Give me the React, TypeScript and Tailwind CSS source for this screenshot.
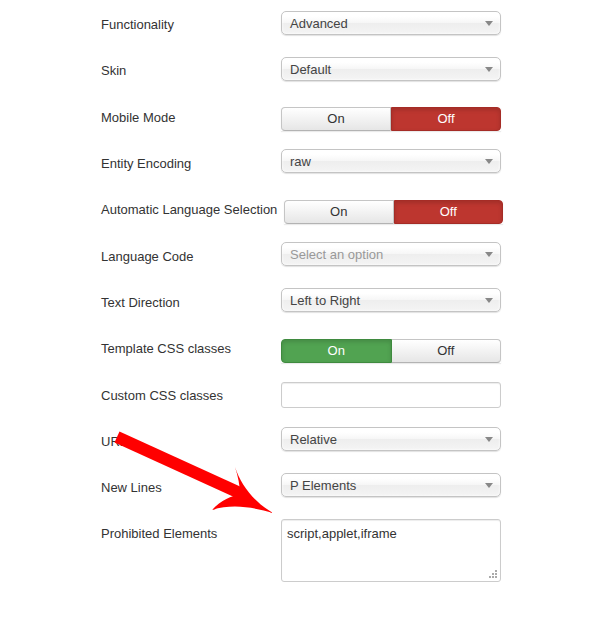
import React from "react";

const FONT = { fontFamily: '"Liberation Sans", Arial, sans-serif' };

function Select({ value, placeholder = false }: { value: string; placeholder?: boolean }) {
  return (
    <div className="relative flex h-[24px] w-[220px] items-center rounded-[5px] border border-[#c4c4c4] bg-[linear-gradient(#ffffff_20%,#f6f6f6_50%,#eeeeee_52%,#f4f4f4_100%)] pl-[8px] pt-[1px] shadow-[0_1px_1px_rgba(0,0,0,0.12),inset_0_0_3px_#fff]">
      <span className={`text-[13px] leading-[22px] ${placeholder ? "text-[#999]" : "text-[#444]"}`}>{value}</span>
      <svg className="absolute right-[7px] top-[9px]" width="8" height="5" viewBox="0 0 8 5">
        <path d="M0 0 H8 L4 5 Z" fill="#888" />
      </svg>
    </div>
  );
}

function Toggle({ on, width = 220 }: { on: boolean; width?: number }) {
  const half = "flex flex-1 items-center justify-center text-[13px] leading-[22px]";
  const plain =
    "bg-[linear-gradient(#ffffff,#e6e6e6)] text-[#333] border border-[#c5c5c5] border-b-[#b3b3b3]";
  return (
    <div className="flex h-[24px] shadow-[0_1px_1px_rgba(0,0,0,0.08)]" style={{ width }}>
      <div
        className={`${half} rounded-l-[4px] ${
          on
            ? "bg-[#51a351] text-white border border-[#3f8a3f] shadow-[inset_0_2px_4px_rgba(0,0,0,0.15)]"
            : plain
        }`}
      >
        On
      </div>
      <div
        className={`${half} rounded-r-[4px] ${
          !on
            ? "bg-[#bd362f] text-white border border-[#a52c26] shadow-[inset_0_2px_4px_rgba(0,0,0,0.15)]"
            : `${plain} border-l-0`
        }`}
      >
        Off
      </div>
    </div>
  );
}

function Row({
  label,
  h,
  mt = 0,
  ml = 0,
  pt = 6,
  children,
}: {
  label: string;
  h: number;
  mt?: number;
  ml?: number;
  pt?: number;
  children: React.ReactNode;
}) {
  return (
    <div className="flex items-start" style={{ height: h }}>
      <div
        className="w-[180px] shrink-0 whitespace-nowrap text-[13px] leading-[18px] text-[#333]"
        style={{ paddingTop: pt }}
      >
        {label}
      </div>
      <div style={{ marginTop: mt, marginLeft: ml }}>{children}</div>
    </div>
  );
}

export default function App() {
  return (
    <div className="relative h-[620px] w-[600px] overflow-hidden bg-white pl-[101px] pt-[11px]" style={FONT}>
      <Row label="Functionality" h={46} pt={5}>
        <Select value="Advanced" />
      </Row>
      <Row label="Skin" h={46} pt={5}>
        <Select value="Default" />
      </Row>
      <Row label="Mobile Mode" h={46} mt={4}>
        <Toggle on={false} />
      </Row>
      <Row label="Entity Encoding" h={46}>
        <Select value="raw" />
      </Row>
      <Row label="Automatic Language Selection" h={47} mt={5} ml={3}>
        <Toggle on={false} width={219} />
      </Row>
      <Row label="Language Code" h={46}>
        <Select value="Select an option" placeholder />
      </Row>
      <Row label="Text Direction" h={46}>
        <Select value="Left to Right" />
      </Row>
      <Row label="Template CSS classes" h={48} mt={5}>
        <Toggle on={true} />
      </Row>
      <Row label="Custom CSS classes" h={45} pt={5}>
        <div className="h-[26px] w-[220px] rounded-[3px] border border-[#ccc] bg-white shadow-[inset_0_1px_1px_rgba(0,0,0,0.075)]" />
      </Row>
      <Row label="URL" h={46}>
        <Select value="Relative" />
      </Row>
      <Row label="New Lines" h={46}>
        <Select value="P Elements" />
      </Row>
      <Row label="Prohibited Elements" h={70}>
        <div className="relative">
          <textarea
            readOnly
            defaultValue="script,applet,iframe"
            className="block h-[63px] w-[220px] resize-none rounded-[3px] border border-[#ccc] bg-white px-[5px] pb-[4px] pt-[5px] text-[13px] leading-[18px] text-[#333] shadow-[inset_0_1px_1px_rgba(0,0,0,0.075)] outline-none"
            style={FONT}
          />
          <svg className="absolute bottom-[3px] right-[3px]" width="9" height="9" viewBox="0 0 9 9">
            <rect x="6" y="0" width="2" height="2" fill="#aaa" />
            <rect x="3" y="3" width="2" height="2" fill="#aaa" />
            <rect x="6" y="3" width="2" height="2" fill="#aaa" />
            <rect x="0" y="6" width="2" height="2" fill="#aaa" />
            <rect x="3" y="6" width="2" height="2" fill="#aaa" />
            <rect x="6" y="6" width="2" height="2" fill="#aaa" />
          </svg>
        </div>
      </Row>

      <svg className="pointer-events-none absolute left-0 top-0" width="600" height="620" viewBox="0 0 600 620">
        <line x1="117" y1="437" x2="242" y2="494" stroke="#ff0000" strokeWidth="12" />
        <path
          d="M235 467 C 241 485 253 501 273 513 C 255 508 234 503 212 510 C 221 500 232 496 240 494 C 240 486 238 476 235 467 Z"
          fill="#ff0000"
        />
      </svg>
    </div>
  );
}
